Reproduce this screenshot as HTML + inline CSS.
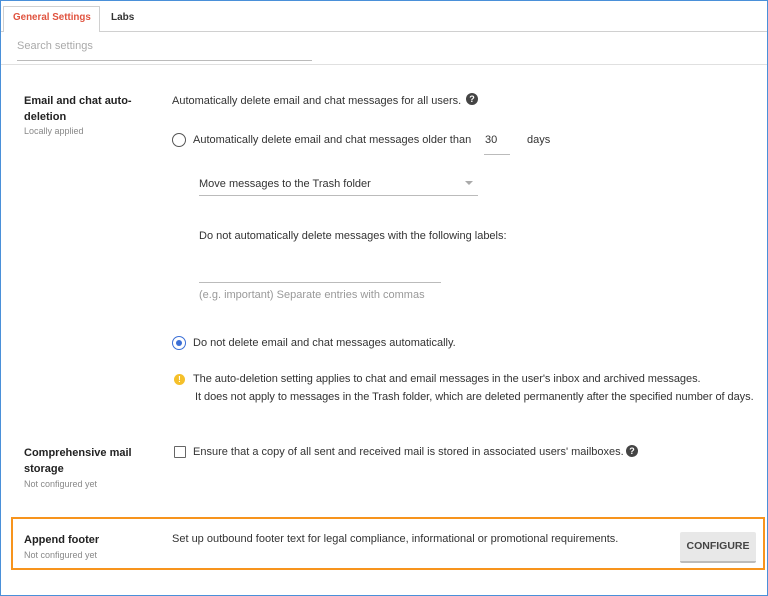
<!DOCTYPE html>
<html><head><meta charset="utf-8"><style>
*{margin:0;padding:0;box-sizing:border-box}
html,body{width:768px;height:596px;overflow:hidden;background:#fff}
body{font-family:"Liberation Sans",Arial,sans-serif;color:#333;font-size:11px;position:relative}
.frame{position:absolute;left:0;top:0;width:768px;height:596px;border:1px solid #4a90d9}
.a{position:absolute;white-space:nowrap;line-height:14px}
.b{font-weight:bold;color:#222;font-size:11px}
.s{font-size:9px;color:#888}
.line{position:absolute;height:1px;background:#bbb}
.q{position:absolute;width:12px;height:12px;border-radius:50%;background:#444;color:#fff;font-size:9px;font-weight:bold;text-align:center;line-height:12px}
</style></head><body>
<div class="frame"></div>
<!-- tabs -->
<div style="position:absolute;left:3px;top:6px;width:97px;height:26px;border:1px solid #d0d0d0;border-bottom:none;background:#fff"></div>
<div class="line" style="left:1px;top:31px;width:2px;background:#d0d0d0"></div>
<div class="line" style="left:99px;top:31px;width:668px;background:#d0d0d0"></div>
<div class="a" style="left:13px;top:11px;color:#e0533f;font-weight:bold;font-size:9.8px">General Settings</div>
<div class="a" style="left:111px;top:11px;color:#333;font-weight:bold;font-size:10px">Labs</div>
<div class="a" style="left:17px;top:39px;color:#aaa;font-size:11px">Search settings</div>
<div class="line" style="left:17px;top:60px;width:295px;background:#bbb"></div>
<div class="line" style="left:1px;top:64px;width:766px;background:#e0e0e0"></div>
<!-- section 1 -->
<div class="a b" style="left:24px;top:94px">Email and chat auto-</div>
<div class="a b" style="left:24px;top:110px">deletion</div>
<div class="a s" style="left:24px;top:124px">Locally applied</div>
<div class="a" style="left:172px;top:94px">Automatically delete email and chat messages for all users.</div>
<div class="q" style="left:466px;top:93px">?</div>
<div style="position:absolute;left:172px;top:133px;width:14px;height:14px;border:1.5px solid #555;border-radius:50%"></div>
<div class="a" style="left:193px;top:133px">Automatically delete email and chat messages older than</div>
<div class="a" style="left:485px;top:133px">30</div>
<div class="line" style="left:484px;top:154px;width:26px;background:#bbb"></div>
<div class="a" style="left:527px;top:133px">days</div>
<div class="a" style="left:199px;top:177px">Move messages to the Trash folder</div>
<div style="position:absolute;left:465px;top:181px;width:0;height:0;border-left:4px solid transparent;border-right:4px solid transparent;border-top:4px solid #aaa"></div>
<div class="line" style="left:199px;top:195px;width:279px;background:#bbb"></div>
<div class="a" style="left:199px;top:229px">Do not automatically delete messages with the following labels:</div>
<div class="line" style="left:199px;top:282px;width:242px;background:#bbb"></div>
<div class="a" style="left:199px;top:288px;color:#999">(e.g. important) Separate entries with commas</div>
<div style="position:absolute;left:172px;top:336px;width:14px;height:14px;border:1.5px solid #3b6fd6;border-radius:50%"></div>
<div style="position:absolute;left:176px;top:340px;width:6px;height:6px;background:#3b6fd6;border-radius:50%"></div>
<div class="a" style="left:193px;top:336px">Do not delete email and chat messages automatically.</div>
<div style="position:absolute;left:174px;top:374px;width:11px;height:11px;border-radius:50%;background:#f5c02a;color:#fff;font-size:8px;font-weight:bold;text-align:center;line-height:11px">!</div>
<div class="a" style="left:193px;top:372px;letter-spacing:-0.05px">The auto-deletion setting applies to chat and email messages in the user's inbox and archived messages.</div>
<div class="a" style="left:195px;top:390px;letter-spacing:-0.05px">It does not apply to messages in the Trash folder, which are deleted permanently after the specified number of days.</div>
<!-- section 2 -->
<div class="a b" style="left:24px;top:446px">Comprehensive mail</div>
<div class="a b" style="left:24px;top:462px">storage</div>
<div class="a s" style="left:24px;top:477px">Not configured yet</div>
<div style="position:absolute;left:174px;top:446px;width:12px;height:12px;border:1.5px solid #666;border-radius:1px"></div>
<div class="a" style="left:193px;top:445px">Ensure that a copy of all sent and received mail is stored in associated users' mailboxes.</div>
<div class="q" style="left:626px;top:445px">?</div>
<!-- footer -->
<div style="position:absolute;left:11px;top:517px;width:754px;height:53px;border:2px solid #f7941d"></div>
<div class="a b" style="left:24px;top:533px">Append footer</div>
<div class="a s" style="left:24px;top:548px">Not configured yet</div>
<div class="a" style="left:172px;top:532px">Set up outbound footer text for legal compliance, informational or promotional requirements.</div>
<div style="position:absolute;left:680px;top:532px;width:76px;height:31px;background:#e8e8e8;border-bottom:2px solid #bbb;border-radius:2px;color:#444;font-weight:bold;font-size:10.5px;text-align:center;line-height:29px">CONFIGURE</div>
</body></html>
